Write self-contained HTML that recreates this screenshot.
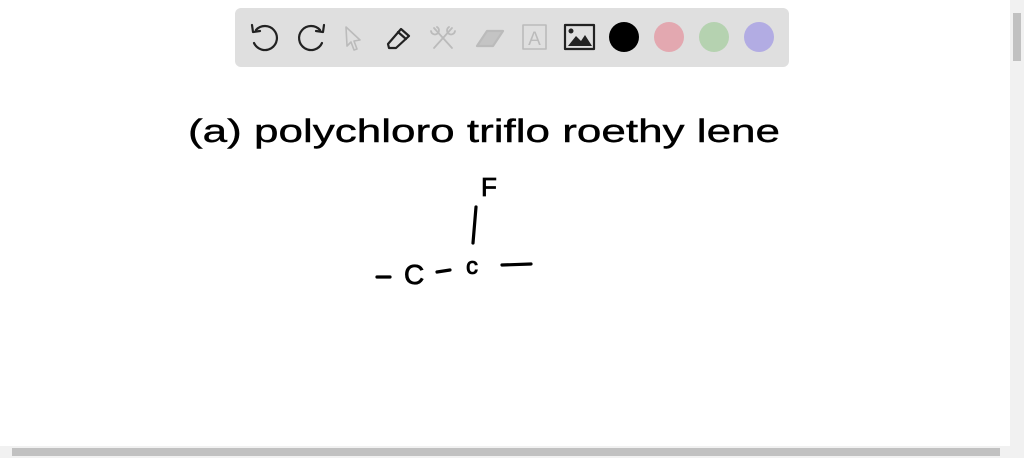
<!DOCTYPE html>
<html><head><style>
body{margin:0;width:1024px;height:458px;background:#fff;position:relative;overflow:hidden;font-family:"Liberation Sans",sans-serif}
.tb{position:absolute;left:235px;top:8px;width:554px;height:59px;background:#dfdfdf;border-radius:6px}
.vs{position:absolute;left:1010px;top:0;width:14px;height:446px;background:#f1f1f1}
.vt{position:absolute;left:1013px;top:13px;width:8px;height:48px;background:#c1c1c1}
.hs{position:absolute;left:0;top:446px;width:1024px;height:12px;background:#f1f1f1}
.ht{position:absolute;left:12px;top:448px;width:988px;height:8px;background:#c1c1c1}
</style></head><body>
<div class="tb"></div>
<svg style="position:absolute;left:0;top:0" width="1024" height="458">
<g fill="none" stroke-width="2.2" stroke-linecap="round" stroke-linejoin="round">
<path d="M256 30 A12 12 0 1 1 254 43" stroke="#222"/><path d="M252 25 L253 32 L260 31" stroke="#222"/>
<path d="M320 30 A12 12 0 1 0 322 43" stroke="#222"/><path d="M324 25 L323 32 L316 31" stroke="#222"/>
<path d="M346 27 L360 40 L354 41 L357 49 L354 50 L351 42 L347 46 Z" stroke="#bbb" stroke-width="1.6"/>
<path d="M388 44 L401 29 L409 36 L396 48 L389 48 Z M398 32 L406 39" stroke="#222"/>
<path d="M434 28 L452 48 M452 28 L434 48 M431 31 a4 4 0 1 0 6 -4 M455 31 a4 4 0 1 1 -6 -4" stroke="#bbb" stroke-width="1.8"/>
<path d="M477 46 L487 31 L503 31 L493 46 Z M477 46 L485 46" stroke="#bbb" fill="#c4c4c4"/>
<rect x="523" y="25" width="23" height="24" stroke="#bbb" stroke-width="1.6"/>
<rect x="565" y="25" width="29" height="24" stroke="#222"/>
</g>
<text x="534.5" y="45" font-size="19" fill="#bbb" text-anchor="middle">A</text>
<circle cx="571" cy="31" r="2.5" fill="#222"/><path d="M568 46 L576 36 L581 41 L585 35 L592 46 Z" fill="#222"/>
<circle cx="624" cy="37" r="15" fill="#000"/>
<circle cx="669" cy="37" r="15" fill="#e3a8b0"/>
<circle cx="714" cy="37" r="15" fill="#b5d2b0"/>
<circle cx="759" cy="37" r="15" fill="#b2ace3"/>
<text x="188" y="142" font-size="32" fill="#000" textLength="592" lengthAdjust="spacingAndGlyphs" stroke="#000" stroke-width="0.4">(a) polychloro triflo roethy lene</text>
<text x="481" y="196" font-size="26" fill="#000" stroke="#000" stroke-width="0.8">F</text>
<text x="404" y="284" font-size="28" fill="#000" stroke="#000" stroke-width="0.8">C</text>
<text x="466" y="274" font-size="24" fill="#000" stroke="#000" stroke-width="0.8">c</text>
<g stroke="#000" stroke-width="3.2" stroke-linecap="round">
<path d="M377 277 L390 277 M437 272 L450 270 M502 265 L531 264 M476 207 L473 243"/>
</g>
</svg>
<div class="vs"></div><div class="vt"></div>
<div class="hs"></div><div class="ht"></div>
</body></html>
